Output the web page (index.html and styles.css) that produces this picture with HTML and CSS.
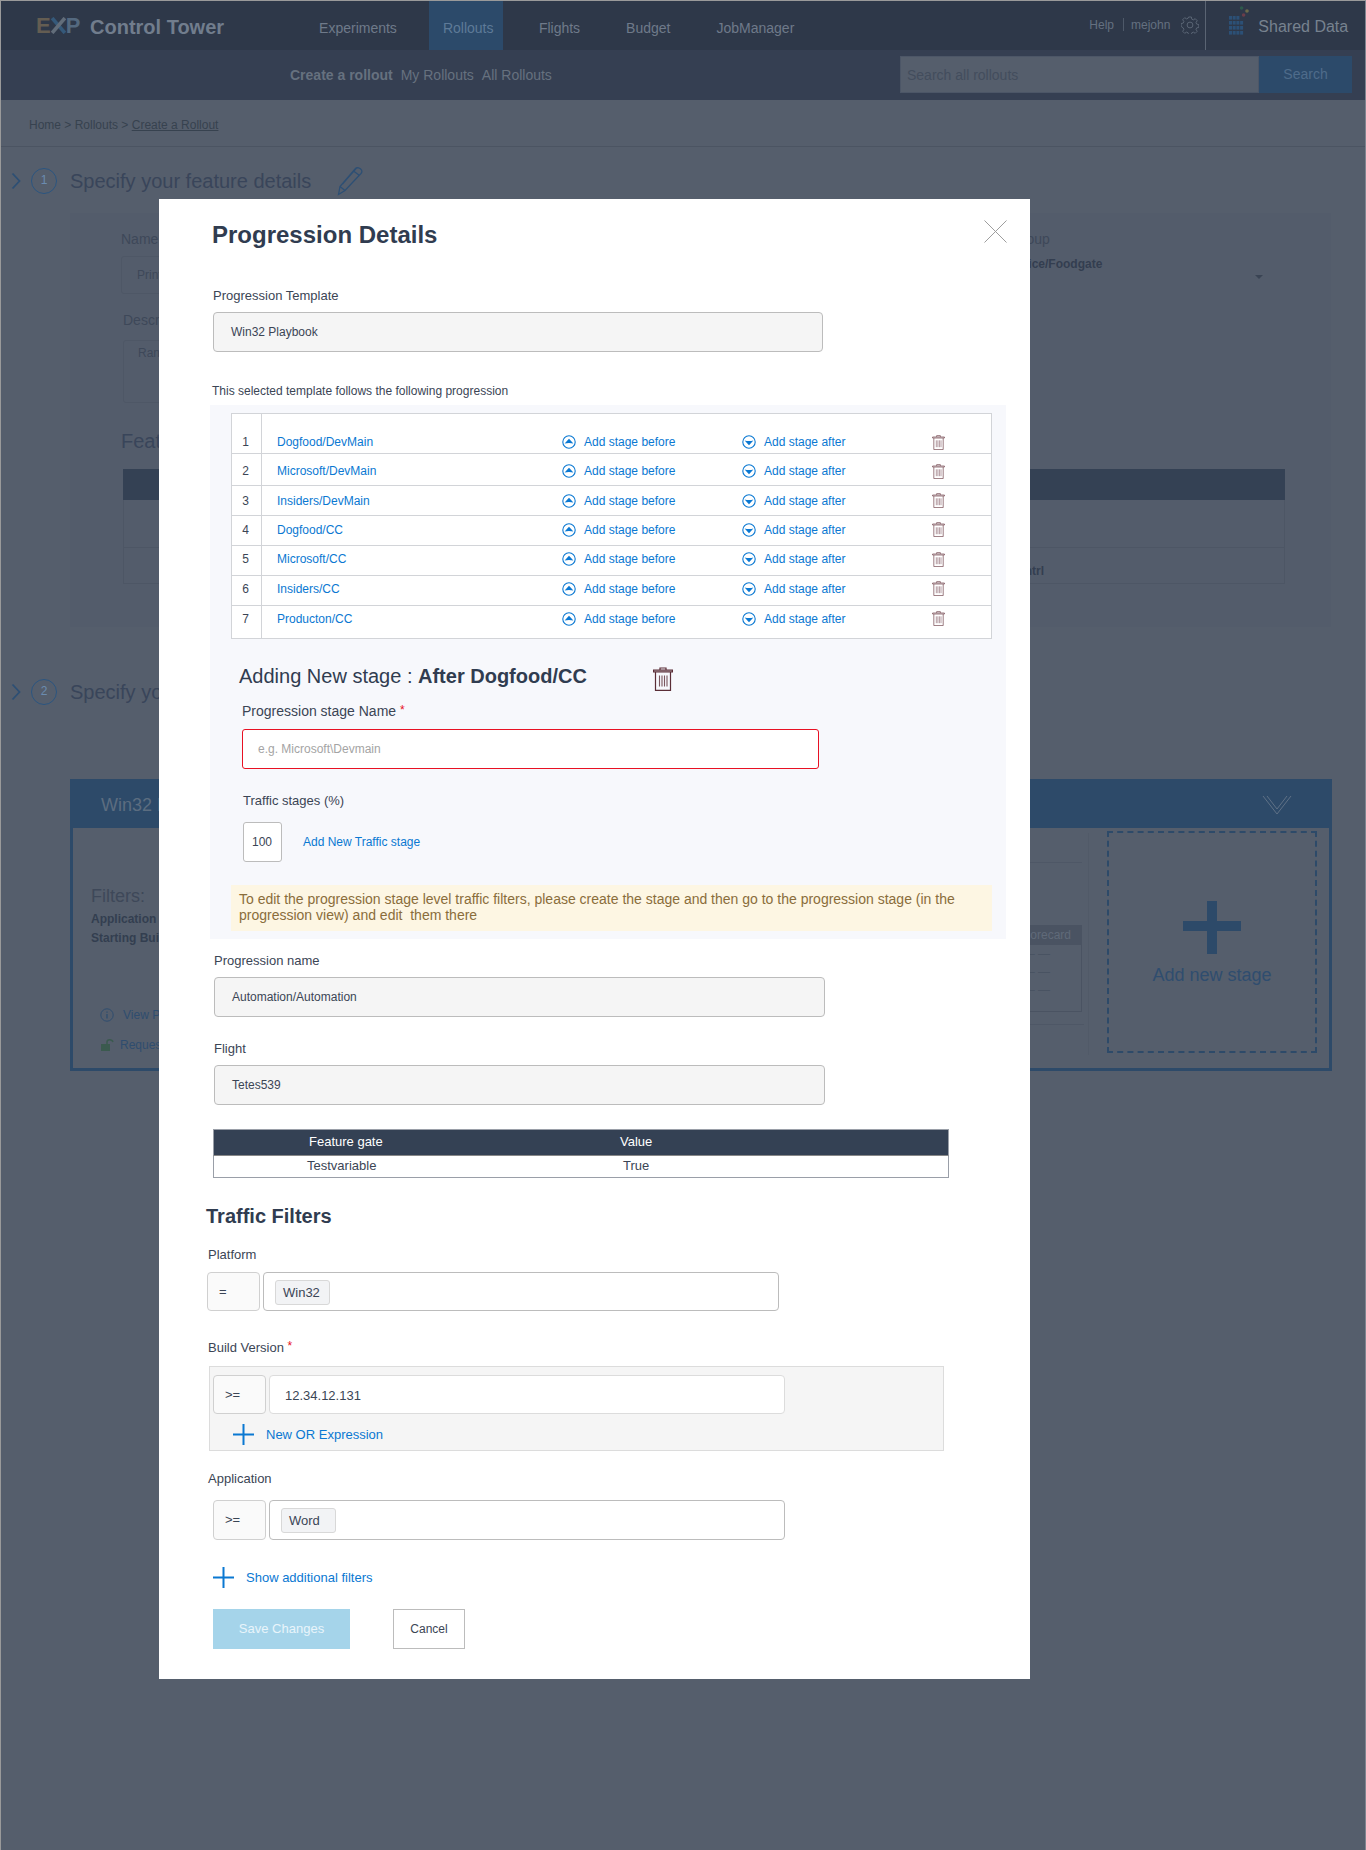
FILE: index.html
```html
<!DOCTYPE html>
<html lang="en">
<head>
<meta charset="utf-8">
<title>Control Tower - Create a Rollout</title>
<link rel="stylesheet" href="styles.css">
</head>
<body>
<svg class="defs" width="0" height="0" aria-hidden="true">
  <symbol id="up" viewBox="0 0 14 14"><circle cx="7" cy="7" r="6.2" fill="none" stroke="currentColor" stroke-width="1.1"/><path d="M2.6 8.600 7 3.700l4.400 4.900c-2.800-.9-6-.9-8.800 0z" fill="currentColor"/></symbol>
  <symbol id="down" viewBox="0 0 14 14"><circle cx="7" cy="7" r="6.2" fill="none" stroke="currentColor" stroke-width="1.1"/><path d="M2.6 5.400 7 10.300l4.400-4.900c-2.800.9-6 .9-8.800 0z" fill="currentColor"/></symbol>
  <symbol id="trash" viewBox="0 0 20 24"><path d="M7 3V1h6v2M.5 3.200h19v1.600H.5zM2.500 5v18.300h15V5" fill="none" stroke="currentColor" stroke-width="1.200"/><path d="M6.500 8.500v11M9 8.500v11M11.500 8.500v11M14 8.500v11" fill="none" stroke="currentColor" stroke-width="1.100" opacity=".8"/></symbol>
  <symbol id="plus" viewBox="0 0 21 21"><path d="M0 10.500h21M10.500 0v21" fill="none" stroke="currentColor" stroke-width="2"/></symbol>
</svg>
<div class="page">
  <header class="topbar">
    <div class="logo"><span class="logo-e">E</span><svg class="logo-x" viewBox="0 0 16 16" width="17" height="17" aria-hidden="true"><path d="M2 1l12 14" stroke="#35597a" stroke-width="3.400"/><path d="M14 1 2 15" stroke="#626d7a" stroke-width="3.400"/></svg><span class="logo-p">P</span></div>
    <div class="product">Control Tower</div>
    <nav class="nav">
      <a class="nav-item">Experiments</a>
      <a class="nav-item nav-active">Rollouts</a>
      <a class="nav-item">Flights</a>
      <a class="nav-item">Budget</a>
      <a class="nav-item">JobManager</a>
    </nav>
    <div class="user">
      <span>Help</span><span class="user-sep"></span><span>mejohn</span>
      <svg class="gear" viewBox="0 0 18 18" width="18" height="18" aria-hidden="true"><path d="M7.600 1h2.800l.4 2.200 1.500.7 1.900-1.200 2 2-1.200 1.900.7 1.500 2.100.5v2.800l-2.100.5-.7 1.500 1.200 1.900-2 2-1.900-1.200-1.500.7-.4 2.100H7.600l-.5-2.100-1.500-.7-1.900 1.200-2-2 1.200-1.900-.7-1.500L.1 10.400V7.600l2.100-.5.7-1.500-1.200-1.900 2-2 1.900 1.200 1.500-.7z" fill="none" stroke="#5f6a79" stroke-width=".9"/><circle cx="9" cy="9" r="2.900" fill="none" stroke="#5f6a79" stroke-width=".9"/></svg>
    </div>
    <div class="shared">
      <svg class="grid-icon" viewBox="0 0 20 29" width="20" height="29" aria-hidden="true"><g fill="#2c5076"><rect x="0" y="10" width="3" height="3.600"/><rect x="3.700" y="10" width="3" height="3.600"/><rect x="7.400" y="10" width="3" height="3.600"/><rect x="0" y="15" width="3" height="3.600"/><rect x="3.700" y="15" width="3" height="3.600"/><rect x="7.400" y="15" width="3" height="3.600"/><rect x="11.100" y="15" width="3" height="3.600"/><rect x="0" y="20" width="3" height="3.600"/><rect x="3.700" y="20" width="3" height="3.600"/><rect x="7.400" y="20" width="3" height="3.600"/><rect x="11.100" y="20" width="3" height="3.600"/><rect x="0" y="25" width="3" height="3.600"/><rect x="3.700" y="25" width="3" height="3.600"/><rect x="7.400" y="25" width="3" height="3.600"/><rect x="11.100" y="25" width="3" height="3.600"/></g><circle cx="12.600" cy="2" r="1.800" fill="#2d5a4c"/><circle cx="18" cy="5" r="1.800" fill="#6b6a4a"/><circle cx="14.600" cy="9" r="1.800" fill="#6a3d4a"/></svg>
      <span>Shared Data</span>
    </div>
  </header>
  <div class="subbar">
    <div class="subnav"><b>Create a rollout</b><span>My Rollouts</span><span>All Rollouts</span></div>
    <div class="search"><div class="search-input">Search all rollouts</div><div class="search-btn">Search</div></div>
  </div>
  <div class="crumbs">Home &gt; Rollouts &gt; <u>Create a Rollout</u></div>

  <div class="sec-head">
    <svg class="chev" viewBox="0 0 10 18" width="10" height="18" aria-hidden="true"><path d="M1.500 1.500 8.500 9l-7 7.500" fill="none" stroke="#2d4f74" stroke-width="1.800"/></svg>
    <span class="step">1</span>
    <h2 class="sec-title">Specify your feature details</h2>
    <svg class="pencil" viewBox="0 0 26 30" width="26" height="30" aria-hidden="true"><path d="M1.500 28.500l1.500-8L18.500 2.500c1.500-1.500 5-.5 6 1.500.7 1.400.4 2.500-.5 3.500L8 24.500zM3 20.500l5 4M16.500 5l6 4.500M5.500 18l14-16" fill="none" stroke="#2d4f74" stroke-width="1.300"/></svg>
  </div>
  <section class="card">
    <div class="card-top">
      <div class="col-form">
        <div class="bg-label">Name</div>
        <div class="bg-input">Print</div>
        <div class="bg-label bg-label-desc">Description</div>
        <div class="bg-area">Random text</div>
        <div class="bg-heading">Feature gates</div>
      </div>
      <div class="col-group">
        <div class="bg-label">Group</div>
        <div class="group-val"><b>Office/Foodgate</b></div>
        <div class="caret"></div>
      </div>
    </div>
    <div class="bg-table">
      <div class="bg-thead"></div>
      <div class="bg-row bg-row-a"></div>
      <div class="bg-row bg-row-b"><b>Cntrl</b></div>
    </div>
  </section>

  <div class="sec-head sec-head-2">
    <svg class="chev" viewBox="0 0 10 18" width="10" height="18" aria-hidden="true"><path d="M1.500 1.500 8.500 9l-7 7.500" fill="none" stroke="#2d4f74" stroke-width="1.800"/></svg>
    <span class="step">2</span>
    <h2 class="sec-title">Specify your progression</h2>
  </div>
  <section class="prog">
    <div class="prog-head">
      <span>Win32 Playbook</span>
      <svg viewBox="0 0 30 22" width="30" height="22" aria-hidden="true"><path d="M1 2l14 18L29 2M5 2l10 13L25 2" fill="none" stroke="#5f7186" stroke-width="1"/></svg>
    </div>
    <div class="prog-body">
      <div class="stage-card">
        <div class="stage-left">
          <div class="filters">Filters:</div>
          <div class="filter-line"><b>Application</b></div>
          <div class="filter-line"><b>Starting Build</b></div>
          <div class="view-row"><svg viewBox="0 0 14 14" width="14" height="14" aria-hidden="true"><circle cx="7" cy="7" r="6.200" fill="none" stroke="#2f4d6f"/><path d="M7 6v4.500M7 3.400v1.300" stroke="#2f4d6f" stroke-width="1.300"/></svg><span>View Progression</span></div>
          <div class="req-row"><svg viewBox="0 0 14 12" width="14" height="12" aria-hidden="true"><rect x="0" y="5" width="9" height="7" fill="#3b5a4f"/><path d="M6 5V3c0-3 5-3 6 0" fill="none" stroke="#3b5a4f" stroke-width="1.500"/></svg><span>Request approval</span></div>
        </div>
        <div class="stage-right">
          <div class="stage-right-top"></div>
          <div class="score">
            <div class="score-head">Scorecard</div>
            <div class="score-row">— —</div>
            <div class="score-row">— —</div>
            <div class="score-row">— —</div>
          </div>
          <div class="stage-line"></div>
        </div>
      </div>
      <div class="add-stage">
        <div class="big-plus"></div>
        <div class="add-text">Add new stage</div>
      </div>
    </div>
  </section>
</div>

<main class="modal">
  <svg class="close" viewBox="0 0 24 24" width="23" height="23" aria-hidden="true"><path d="M.5.500l23 23M23.500.500l-23 23" stroke="#999" stroke-width="1" fill="none"/></svg>
  <h1 class="modal-title">Progression Details</h1>
  <div class="label m-template">Progression Template</div>
  <div class="ro-input ro-first">Win32 Playbook</div>
  <div class="note">This selected template follows the following progression</div>

  <section class="panel">
    <div class="stages">
      <div class="srow r1"><span class="num">1</span><a class="name">Dogfood/DevMain</a><a class="act act-b"><svg class="ic"><use href="#up"/></svg>Add stage before</a><a class="act act-a"><svg class="ic"><use href="#down"/></svg>Add stage after</a><svg class="tr"><use href="#trash"/></svg></div>
      <div class="srow r2"><span class="num">2</span><a class="name">Microsoft/DevMain</a><a class="act act-b"><svg class="ic"><use href="#up"/></svg>Add stage before</a><a class="act act-a"><svg class="ic"><use href="#down"/></svg>Add stage after</a><svg class="tr"><use href="#trash"/></svg></div>
      <div class="srow r3"><span class="num">3</span><a class="name">Insiders/DevMain</a><a class="act act-b"><svg class="ic"><use href="#up"/></svg>Add stage before</a><a class="act act-a"><svg class="ic"><use href="#down"/></svg>Add stage after</a><svg class="tr"><use href="#trash"/></svg></div>
      <div class="srow r4"><span class="num">4</span><a class="name">Dogfood/CC</a><a class="act act-b"><svg class="ic"><use href="#up"/></svg>Add stage before</a><a class="act act-a"><svg class="ic"><use href="#down"/></svg>Add stage after</a><svg class="tr"><use href="#trash"/></svg></div>
      <div class="srow r5"><span class="num">5</span><a class="name">Microsoft/CC</a><a class="act act-b"><svg class="ic"><use href="#up"/></svg>Add stage before</a><a class="act act-a"><svg class="ic"><use href="#down"/></svg>Add stage after</a><svg class="tr"><use href="#trash"/></svg></div>
      <div class="srow r6"><span class="num">6</span><a class="name">Insiders/CC</a><a class="act act-b"><svg class="ic"><use href="#up"/></svg>Add stage before</a><a class="act act-a"><svg class="ic"><use href="#down"/></svg>Add stage after</a><svg class="tr"><use href="#trash"/></svg></div>
      <div class="srow r7"><span class="num">7</span><a class="name">Producton/CC</a><a class="act act-b"><svg class="ic"><use href="#up"/></svg>Add stage before</a><a class="act act-a"><svg class="ic"><use href="#down"/></svg>Add stage after</a><svg class="tr"><use href="#trash"/></svg></div>
    </div>
    <div class="new-head"><h2 class="new-title">Adding New stage : <b>After Dogfood/CC</b></h2><svg class="tr-lg"><use href="#trash"/></svg></div>
    <div class="label label-lg m-stage">Progression stage Name <span class="req">*</span></div>
    <div class="err-input">e.g. Microsoft\Devmain</div>
    <div class="label m-traffic">Traffic stages (%)</div>
    <div class="traffic-row"><div class="pct">100</div><a class="link">Add New Traffic stage</a></div>
    <div class="warn">To edit the progression stage level traffic filters, please create the stage and then go to the progression stage (in the progression view) and edit &nbsp;them there</div>
  </section>

  <div class="label m-pname">Progression name</div>
  <div class="ro-input">Automation/Automation</div>
  <div class="label m-flight">Flight</div>
  <div class="ro-input">Tetes539</div>

  <div class="gates">
    <div class="gates-head"><span class="g1">Feature gate</span><span class="g2">Value</span></div>
    <div class="gates-row"><span class="g3">Testvariable</span><span class="g4">True</span></div>
  </div>

  <h2 class="filters-title">Traffic Filters</h2>
  <div class="label m-platform">Platform</div>
  <div class="expr expr-platform"><div class="op">=</div><div class="val"><span class="chip">Win32</span></div></div>
  <div class="label m-build">Build Version <span class="req">*</span></div>
  <div class="or-box">
    <div class="expr"><div class="op">&gt;=</div><div class="val val-text">12.34.12.131</div></div>
    <a class="add-or"><svg class="pl"><use href="#plus"/></svg>New OR Expression</a>
  </div>
  <div class="label m-app">Application</div>
  <div class="expr expr-app"><div class="op">&gt;=</div><div class="val"><span class="chip">Word</span></div></div>
  <a class="add-more"><svg class="pl"><use href="#plus"/></svg>Show additional filters</a>
  <div class="actions"><div class="btn-save">Save Changes</div><div class="btn-cancel">Cancel</div></div>
</main>
</body>
</html>
```
FILE: styles.css
```css
* { box-sizing: border-box; }
html, body { margin: 0; padding: 0; }
body {
  position: relative;
  width: 1366px;
  height: 1850px;
  overflow: hidden;
  font-family: "Liberation Sans", Arial, sans-serif;
  color: #3b4555;
  background: #555e6c;
}
h1, h2 { margin: 0; font-weight: 400; }
.defs { position: absolute; }

/* dimmed page */
.page { height: 1850px; border: 1px solid #9a9a9a; border-bottom: 0; border-right-color: #7f8590; background: #555e6c; }
.topbar { height: 49px; display: flex; background: #2e3849; color: #6f7a8a; }
.logo { display: flex; align-items: center; width: 54px; margin-left: 35px; font-size: 22px; font-weight: 700; line-height: 49px; }
.logo-e { color: #645d52; }
.logo-x { margin: 0 -1px; }
.logo-p { color: #54697f; }
.product { font-size: 20px; font-weight: 700; line-height: 52px; color: #717d8d; }
.nav { display: flex; gap: 18px; margin-left: 81px; font-size: 14px; line-height: 55px; }
.nav-item { padding: 0 14px; }
.nav-active { width: 74px; margin-right: 4px; padding-right: 0; background: #2c4a6a; color: #5e7a98; }
.user { display: flex; align-items: center; margin-left: 281px; height: 49px; padding-bottom: 2px; font-size: 12px; color: #647080; }
.user-sep { width: 1px; height: 13px; margin: 0 7px 0 9px; background: #4e5969; }
.gear { margin-left: 11px; }
.shared { display: flex; align-items: center; margin-left: 6px; padding: 2px 0 0 23px; border-left: 1px solid #5a6473; font-size: 16px; color: #77828f; }
.grid-icon { align-self: flex-start; margin: 3px 9px 0 0; }

.subbar { height: 50px; display: flex; justify-content: space-between; background: #353f52; }
.subnav { display: flex; gap: 8px; margin-left: 289px; font-size: 14px; line-height: 50px; color: #66717f; }
.search { display: flex; margin-right: 13px; height: 37px; margin-top: 6px; font-size: 14px; line-height: 37px; }
.search-input { width: 359px; padding-left: 6px; background: #555e6c; color: #434d5d; border: 1px solid #4c5667; }
.search-btn { width: 93px; text-align: center; background: #2c4a6a; color: #4f6c8b; }

.crumbs { height: 47px; padding: 17px 0 0 28px; font-size: 12px; line-height: 16px; color: #37424f; border-bottom: 1px solid #4b5462; }

.sec-head { display: flex; align-items: center; height: 30px; margin-top: 19px; padding-left: 10px; }
.sec-head-2 { margin-top: 50px; }
.chev { flex: none; }
.step { flex: none; width: 26px; height: 26px; margin-left: 10px; border: 1.5px solid #2b5580; border-radius: 50%; text-align: center; font-size: 12px; line-height: 23px; color: #6b8cb0; }
.sec-title { margin-left: 13px; font-size: 20px; color: #39455a; white-space: nowrap; }
.pencil { margin-left: 26px; }

.card { height: 414px; margin: 17px 34px 0 69px; padding-left: 51px; background: #535c6b; }
.card-top { display: flex; height: 256px; }
.col-form { width: 890px; }
.col-group { position: relative; width: 270px; padding-top: 18px; }
.bg-label { padding-top: 18px; font-size: 14px; line-height: 16px; color: #3e4859; }
.col-group .bg-label { padding-top: 0; }
.bg-input { width: 500px; height: 38px; margin-top: 9px; padding-left: 15px; border: 1px solid #4e5766; border-radius: 3px; font-size: 12px; line-height: 36px; color: #3e4859; }
.bg-label-desc { padding: 18px 0 0 2px; }
.bg-area { width: 500px; height: 63px; margin: 12px 0 0 2px; padding: 4px 14px; border: 1px solid #4e5766; border-radius: 3px; font-size: 12px; line-height: 16px; color: #3e4859; }
.bg-heading { margin-top: 25px; font-size: 20px; line-height: 26px; color: #39455a; }
.group-val { margin-top: 9px; font-size: 12px; line-height: 16px; color: #333e50; }
.caret { position: absolute; left: 244px; top: 62px; border: 4px solid transparent; border-top: 4px solid #3a4454; border-bottom: 0; }
.bg-table { margin-left: 2px; width: 1162px; }
.bg-thead { height: 31px; background: #344154; }
.bg-row { border: 1px solid #4d5665; border-top: 0; }
.bg-row-a { height: 48px; }
.bg-row-b { height: 36px; padding: 15px 0 0 892px; font-size: 12px; line-height: 16px; color: #333e50; }

.prog { height: 292px; margin: 72px 33px 0 69px; border: 3px solid #2d4a69; border-top: 0; }
.prog-head { display: flex; align-items: center; justify-content: space-between; height: 49px; padding: 3px 37px 0 28px; background: #2d4a69; font-size: 18px; color: #5c6d80; }
.prog-body { display: flex; }
.stage-card { display: flex; width: 1016px; height: 222px; margin-top: 5px; border-right: 1px solid #515a68; justify-content: space-between; }
.stage-left { padding: 52px 0 0 18px; color: #3e4859; }
.filters { font-size: 18px; line-height: 22px; }
.filter-line { margin-top: 4px; font-size: 12px; line-height: 17px; color: #333e50; }
.filter-line + .filter-line { margin-top: 2px; }
.view-row, .req-row { display: flex; align-items: center; font-size: 12px; line-height: 16px; color: #2f4d6f; }
.view-row { gap: 9px; margin: 60px 0 0 9px; }
.req-row { gap: 5px; margin: 14px 0 0 10px; }
.stage-right { width: 208px; }
.stage-right-top { height: 30px; border-bottom: 1px solid #4e5766; margin-right: 6px; }
.score { width: 200px; margin: 62px 0 0 2px; border: 1px solid #4a5362; border-top: 0; height: 87px; font-size: 12px; color: #495362; text-align: right; padding-right: 31px; }
.score-head { height: 20px; margin-right: -31px; padding-right: 10px; background: #4a5362; line-height: 20px; color: #606a79; }
.score-row { height: 18px; line-height: 18px; }
.score-row:first-of-type { margin-top: 8px; }
.stage-line { margin: 12px 4px 0 0; border-top: 1px solid #4e5766; }
.add-stage { width: 210px; height: 222px; margin: 3px 0 0 18px; border: 2px dashed #2d4a69; text-align: center; color: #2f4d6f; font-size: 18px; }
.big-plus { position: relative; width: 58px; height: 53px; margin: 68px auto 0; }
.big-plus::before { content: ""; position: absolute; left: 24px; top: 0; width: 10px; height: 53px; background: #2d4a69; }
.big-plus::after { content: ""; position: absolute; left: 0; top: 20px; width: 58px; height: 10px; background: #2d4a69; }
.add-text { margin-top: 10px; line-height: 22px; }

/* modal */
.modal { position: absolute; left: 159px; top: 199px; width: 871px; height: 1480px; padding: 21px 0 0 53px; background: #fff; }
.close { position: absolute; left: 825px; top: 21px; }
.modal-title { height: 30px; font-size: 24px; font-weight: 700; line-height: 30px; color: #303c50; }
.label { margin-left: 2px; font-size: 13px; line-height: 16px; color: #3b4555; }
.label-lg { font-size: 14px; }
.req { color: #e81123; font-size: 12px; line-height: 0; vertical-align: 2px; }
.m-template { margin: 38px 0 0 1px; }
.ro-input { width: 611px; height: 40px; margin: 8px 0 0 2px; padding-left: 17px; background: #f5f5f5; border: 1px solid #bcbcbc; border-radius: 4px; font-size: 12px; line-height: 38px; color: #3b4555; }
.ro-first { margin-left: 1px; width: 610px; }
.note { margin-top: 31px; font-size: 12px; line-height: 16px; color: #3b4555; }

.panel { width: 796px; height: 534px; margin: 6px 0 0 -2px; padding: 8px 0 0 21px; background: #f7f8fc; }
.stages { width: 761px; height: 226px; background: #fff; border: 1px solid #d2d4d8; }
.srow { --pt: 0px; --pb: 0px; display: flex; align-items: center; padding: var(--pt) 0 var(--pb); border-bottom: 1px solid #d2d4d8; font-size: 12px; }
.srow:last-child { border-bottom: 0; }
.r1 { height: 40px; --pt: 17px; }
.r2 { height: 32px; --pt: 3px; }
.r3 { height: 30px; }
.r4 { height: 30px; --pb: 2px; }
.r5 { height: 30px; --pb: 3px; }
.r6 { height: 30px; --pb: 4px; }
.r7 { height: 32px; --pb: 7px; }
.num { align-self: stretch; display: flex; align-items: center; justify-content: center; flex: none; width: 30px; margin: calc(-1 * var(--pt)) 0 calc(-1 * var(--pb)); padding: var(--pt) 2px var(--pb) 0; border-right: 1px solid #d2d4d8; color: #3b4555; }
.name, .act, .link { color: #0a78d2; }
.name { flex: none; width: 285px; margin-left: 15px; white-space: nowrap; }
.act { display: flex; align-items: center; flex: none; white-space: nowrap; }
.act-b { width: 180px; }
.act-a { width: 190px; }
.ic { width: 14px; height: 14px; margin-right: 8px; color: #0a78d2; }
.tr { width: 13px; height: 15px; color: #7a4f57; }
.new-head { display: flex; height: 28px; margin: 23px 0 0 8px; }
.new-title { font-size: 20px; line-height: 28px; color: #303c50; white-space: nowrap; }
.tr-lg { width: 20px; height: 24px; margin: 5px 0 0 66px; color: #5a2d36; }
.m-stage { margin: 13px 0 0 11px; }
.err-input { width: 577px; height: 40px; margin: 10px 0 0 11px; padding-left: 15px; background: #fff; border: 1.5px solid #e81123; border-radius: 3px; font-size: 12px; line-height: 39px; color: #a4a4a4; }
.m-traffic { margin: 24px 0 0 12px; }
.traffic-row { display: flex; align-items: center; margin: 13px 0 0 12px; font-size: 12px; }
.pct { width: 39px; height: 40px; padding-left: 8px; background: #fff; border: 1px solid #bcbcbc; border-radius: 3px; line-height: 38px; color: #3b4555; }
.link { margin-left: 21px; }
.warn { width: 761px; height: 46px; margin-top: 23px; padding: 6px 0 0 8px; background: #fdf6e3; font-size: 14px; line-height: 16px; color: #8a6d3b; }

.m-pname { margin-top: 14px; }
.m-flight { margin-top: 24px; }
.gates { width: 736px; margin: 24px 0 0 1px; font-size: 13px; color: #3b4555; }
.gates-head { position: relative; height: 26px; background: #344154; border: 1px solid #9a9fa8; border-bottom: 0; color: #fff; line-height: 24px; }
.gates-row { position: relative; height: 23px; background: #fff; border: 1px solid #9a9fa8; border-top-color: #888; line-height: 19px; }
.g1, .g2, .g3, .g4 { position: absolute; top: 0; }
.g1 { left: 95px; }
.g2 { left: 406px; }
.g3 { left: 93px; }
.g4 { left: 409px; }
.filters-title { margin: 26px 0 0 -6px; font-size: 20px; font-weight: 700; line-height: 24px; color: #303c50; }
.m-platform { margin: 19px 0 0 -4px; }
.expr { display: flex; gap: 3px; }
.expr-platform { margin: 9px 0 0 -5px; }
.op { width: 53px; height: 39px; padding-left: 11px; background: #fafafa; border: 1px solid #d0d0d0; border-radius: 4px; font-size: 13px; line-height: 37px; }
.val { width: 516px; height: 39px; padding: 7px 0 0 11px; background: #fff; border: 1px solid #bcbcbc; border-radius: 4px; }
.val-text { padding: 0 0 0 15px; border-color: #dcdcdc; font-size: 13px; line-height: 39px; }
.chip { display: block; width: 55px; height: 25px; padding-left: 7px; background: #f2f3f5; border: 1px solid #d8d8d8; border-radius: 3px; font-size: 13px; line-height: 23px; }
.m-build { margin: 29px 0 0 -4px; }
.or-box { width: 735px; height: 85px; margin: 10px 0 0 -3px; padding: 8px 0 0 3px; background: #f5f5f5; border: 1px solid #dcdcdc; }
.add-or { display: flex; align-items: center; margin: 10px 0 0 20px; font-size: 13px; color: #0a78d2; }
.pl { width: 21px; height: 21px; margin-right: 12px; color: #0a78d2; }
.m-app { margin: 20px 0 0 -4px; }
.expr-app { height: 40px; margin: 13px 0 0 1px; }
.expr-app .op, .expr-app .val { height: 40px; }
.add-more { display: flex; align-items: center; margin: 27px 0 0 1px; font-size: 13px; color: #0a78d2; }
.actions { display: flex; margin: 21px 0 0 1px; font-size: 12px; }
.btn-save { width: 137px; height: 40px; background: #a5d4ea; color: #e9f5fb; font-size: 13px; line-height: 40px; text-align: center; }
.btn-cancel { width: 72px; height: 40px; margin-left: 43px; background: #fff; border: 1px solid #bcbcbc; line-height: 38px; text-align: center; color: #3b4555; }
```
